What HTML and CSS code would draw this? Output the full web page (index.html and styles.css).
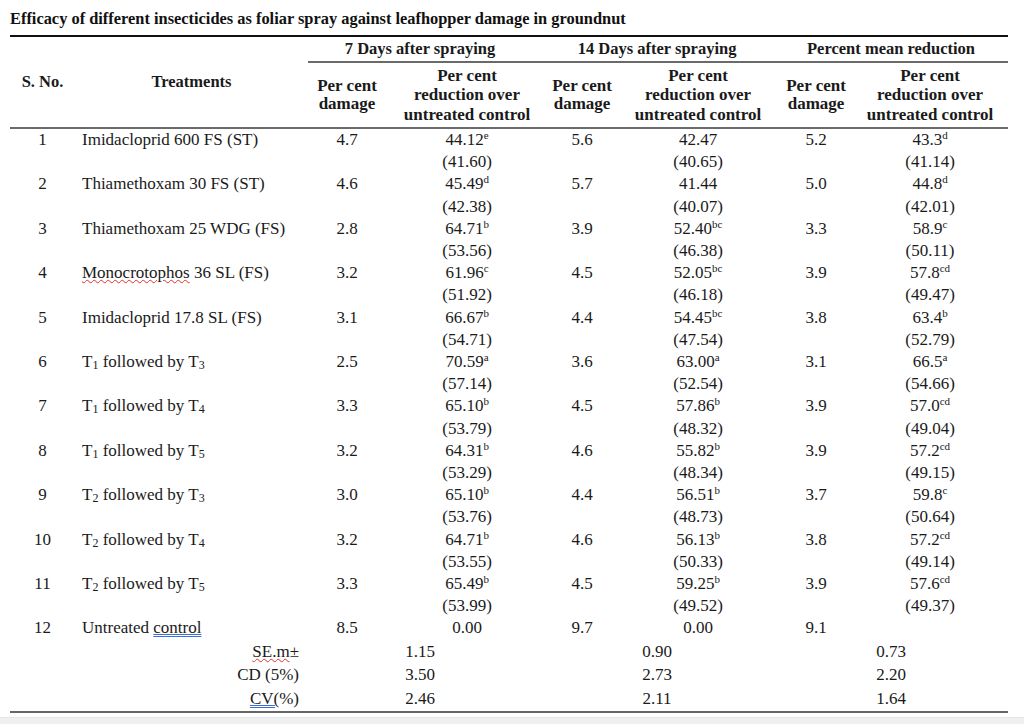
FILE: index.html
```html
<!DOCTYPE html>
<html lang="en">
<head>
    <meta charset="UTF-8">
    <meta name="viewport" content="width=device-width, initial-scale=1.0">
    <title>Efficacy of insecticides against leafhopper</title>
    <link rel="stylesheet" href="styles.css">
</head>
<body>
    <div class="page">
        <h1 class="caption">Efficacy of different insecticides as foliar spray against leafhopper damage in groundnut</h1>
        <table class="efficacy">
            <colgroup>
                <col class="c-sno">
                <col class="c-treat">
                <col class="c-dmg1">
                <col class="c-red1">
                <col class="c-dmg2">
                <col class="c-red2">
                <col class="c-dmg3">
                <col class="c-red3">
            </colgroup>
            <thead>
                <tr class="group-row">
                    <th rowspan="2" class="head-side">S. No.</th>
                    <th rowspan="2" class="head-side">Treatments</th>
                    <th colspan="2" class="group g1">7 Days after spraying</th>
                    <th colspan="2" class="group g2">14 Days after spraying</th>
                    <th colspan="2" class="group g3">Percent mean reduction</th>
                </tr>
                <tr class="sub-row">
                    <th class="sub-dmg">Per cent<br>damage</th>
                    <th>Per cent<br>reduction over<br>untreated control</th>
                    <th class="sub-dmg">Per cent<br>damage</th>
                    <th>Per cent<br>reduction over<br>untreated control</th>
                    <th class="sub-dmg">Per cent<br>damage</th>
                    <th>Per cent<br>reduction over<br>untreated control</th>
                </tr>
            </thead>
            <tbody>
                <tr>
                    <td class="sno">1</td>
                    <td class="treat">Imidacloprid 600 FS (ST)</td>
                    <td>4.7</td>
                    <td>44.12<sup>e</sup><br>(41.60)</td>
                    <td>5.6</td>
                    <td>42.47<br>(40.65)</td>
                    <td>5.2</td>
                    <td>43.3<sup>d</sup><br>(41.14)</td>
                </tr>
                <tr>
                    <td class="sno">2</td>
                    <td class="treat">Thiamethoxam 30 FS (ST)</td>
                    <td>4.6</td>
                    <td>45.49<sup>d</sup><br>(42.38)</td>
                    <td>5.7</td>
                    <td>41.44<br>(40.07)</td>
                    <td>5.0</td>
                    <td>44.8<sup>d</sup><br>(42.01)</td>
                </tr>
                <tr>
                    <td class="sno">3</td>
                    <td class="treat">Thiamethoxam 25 WDG (FS)</td>
                    <td>2.8</td>
                    <td>64.71<sup>b</sup><br>(53.56)</td>
                    <td>3.9</td>
                    <td>52.40<sup>bc</sup><br>(46.38)</td>
                    <td>3.3</td>
                    <td>58.9<sup>c</sup><br>(50.11)</td>
                </tr>
                <tr>
                    <td class="sno">4</td>
                    <td class="treat"><span class="spell">Monocrotophos</span> 36 SL (FS)</td>
                    <td>3.2</td>
                    <td>61.96<sup>c</sup><br>(51.92)</td>
                    <td>4.5</td>
                    <td>52.05<sup>bc</sup><br>(46.18)</td>
                    <td>3.9</td>
                    <td>57.8<sup>cd</sup><br>(49.47)</td>
                </tr>
                <tr>
                    <td class="sno">5</td>
                    <td class="treat">Imidacloprid 17.8 SL (FS)</td>
                    <td>3.1</td>
                    <td>66.67<sup>b</sup><br>(54.71)</td>
                    <td>4.4</td>
                    <td>54.45<sup>bc</sup><br>(47.54)</td>
                    <td>3.8</td>
                    <td>63.4<sup>b</sup><br>(52.79)</td>
                </tr>
                <tr>
                    <td class="sno">6</td>
                    <td class="treat">T<sub>1</sub> followed by T<sub>3</sub></td>
                    <td>2.5</td>
                    <td>70.59<sup>a</sup><br>(57.14)</td>
                    <td>3.6</td>
                    <td>63.00<sup>a</sup><br>(52.54)</td>
                    <td>3.1</td>
                    <td>66.5<sup>a</sup><br>(54.66)</td>
                </tr>
                <tr>
                    <td class="sno">7</td>
                    <td class="treat">T<sub>1</sub> followed by T<sub>4</sub></td>
                    <td>3.3</td>
                    <td>65.10<sup>b</sup><br>(53.79)</td>
                    <td>4.5</td>
                    <td>57.86<sup>b</sup><br>(48.32)</td>
                    <td>3.9</td>
                    <td>57.0<sup>cd</sup><br>(49.04)</td>
                </tr>
                <tr>
                    <td class="sno">8</td>
                    <td class="treat">T<sub>1</sub> followed by T<sub>5</sub></td>
                    <td>3.2</td>
                    <td>64.31<sup>b</sup><br>(53.29)</td>
                    <td>4.6</td>
                    <td>55.82<sup>b</sup><br>(48.34)</td>
                    <td>3.9</td>
                    <td>57.2<sup>cd</sup><br>(49.15)</td>
                </tr>
                <tr>
                    <td class="sno">9</td>
                    <td class="treat">T<sub>2</sub> followed by T<sub>3</sub></td>
                    <td>3.0</td>
                    <td>65.10<sup>b</sup><br>(53.76)</td>
                    <td>4.4</td>
                    <td>56.51<sup>b</sup><br>(48.73)</td>
                    <td>3.7</td>
                    <td>59.8<sup>c</sup><br>(50.64)</td>
                </tr>
                <tr>
                    <td class="sno">10</td>
                    <td class="treat">T<sub>2</sub> followed by T<sub>4</sub></td>
                    <td>3.2</td>
                    <td>64.71<sup>b</sup><br>(53.55)</td>
                    <td>4.6</td>
                    <td>56.13<sup>b</sup><br>(50.33)</td>
                    <td>3.8</td>
                    <td>57.2<sup>cd</sup><br>(49.14)</td>
                </tr>
                <tr>
                    <td class="sno">11</td>
                    <td class="treat">T<sub>2</sub> followed by T<sub>5</sub></td>
                    <td>3.3</td>
                    <td>65.49<sup>b</sup><br>(53.99)</td>
                    <td>4.5</td>
                    <td>59.25<sup>b</sup><br>(49.52)</td>
                    <td>3.9</td>
                    <td>57.6<sup>cd</sup><br>(49.37)</td>
                </tr>
                <tr>
                    <td class="sno">12</td>
                    <td class="treat">Untreated <span class="grammar">control</span></td>
                    <td>8.5</td>
                    <td>0.00</td>
                    <td>9.7</td>
                    <td>0.00</td>
                    <td>9.1</td>
                    <td></td>
                </tr>
                <tr class="stat-row">
                    <td></td>
                    <td class="stat-label"><span class="spell">SE.m</span>±</td>
                    <td colspan="2" class="g1">1.15</td>
                    <td colspan="2" class="g2">0.90</td>
                    <td colspan="2" class="g3">0.73</td>
                </tr>
                <tr class="stat-row">
                    <td></td>
                    <td class="stat-label">CD (5%)</td>
                    <td colspan="2" class="g1">3.50</td>
                    <td colspan="2" class="g2">2.73</td>
                    <td colspan="2" class="g3">2.20</td>
                </tr>
                <tr class="stat-row last">
                    <td></td>
                    <td class="stat-label"><span class="grammar">CV(</span>%)</td>
                    <td colspan="2" class="g1">2.46</td>
                    <td colspan="2" class="g2">2.11</td>
                    <td colspan="2" class="g3">1.64</td>
                </tr>
            </tbody>
        </table>
    </div>
    <div class="status-strip"></div>
</body>
</html>
```

FILE: styles.css
```css
body {
    margin: 0;
    padding: 0;
    background: #fff;
    color: #1a1a1a;
    font-family: "Liberation Serif", "Times New Roman", serif;
    height: 724px;
    overflow: hidden;
}

.page {
    padding: 9px 16px 0 10px;
}

.caption {
    margin: 0 0 6px 0;
    font-size: 16.4px;
    line-height: 20px;
    font-weight: bold;
    color: #111;
}

.efficacy {
    width: 998px;
    border-collapse: collapse;
    table-layout: fixed;
    font-size: 17px;
    border-top: 2px solid #111;
    border-bottom: 2px solid #666;
}

.c-sno { width: 65px; }
.c-treat { width: 233px; }
.c-dmg1 { width: 78px; }
.c-red1 { width: 162px; }
.c-dmg2 { width: 68px; }
.c-red2 { width: 164px; }
.c-dmg3 { width: 72px; }
.c-red3 { width: 156px; }

.efficacy th,
.efficacy td {
    padding: 0;
    text-align: center;
}

/* header */
.efficacy th {
    font-weight: bold;
    font-size: 16.5px;
}

.group-row th {
    height: 24px;
    line-height: 20px;
    vertical-align: middle;
}

.group-row .group {
    border-bottom: 2px solid #6a6a6a;
}

.head-side {
    border-bottom: 2px solid #6a6a6a;
}

.sub-row th {
    height: 64px;
    font-size: 17px;
    line-height: 19.5px;
    vertical-align: middle;
    border-bottom: 2px solid #6a6a6a;
}

.sub-row .sub-dmg {
    line-height: 18.5px;
}

.g1 { padding-right: 16px !important; }
.g2 { padding-right: 14px !important; }
.g3 { padding-right: 6px !important; }

/* body */
.efficacy td {
    line-height: 22.2px;
    vertical-align: top;
}

.efficacy td.treat {
    text-align: left;
    padding-left: 7px;
}

.stat-row td {
    height: 23.6px;
    line-height: 23.6px;
    vertical-align: middle;
}

.stat-row td.stat-label {
    text-align: right;
    padding-right: 9px;
}

.stat-row.last td {
    padding-bottom: 1px;
}

sup {
    font-size: 11px;
    line-height: 0;
    vertical-align: 6px;
}

sub {
    font-size: 12px;
    line-height: 0;
    vertical-align: -2px;
}

.spell {
    text-decoration: underline wavy #e0302f;
    text-decoration-thickness: 1px;
    text-underline-offset: 1px;
}

.grammar {
    text-decoration: underline double #3a6fd8;
    text-decoration-thickness: 1px;
    text-underline-offset: 1px;
}

.status-strip {
    margin-top: 4px;
    height: 10px;
    background: #f0f0f0;
    border-top: 1px solid #e6e6e6;
}
```
